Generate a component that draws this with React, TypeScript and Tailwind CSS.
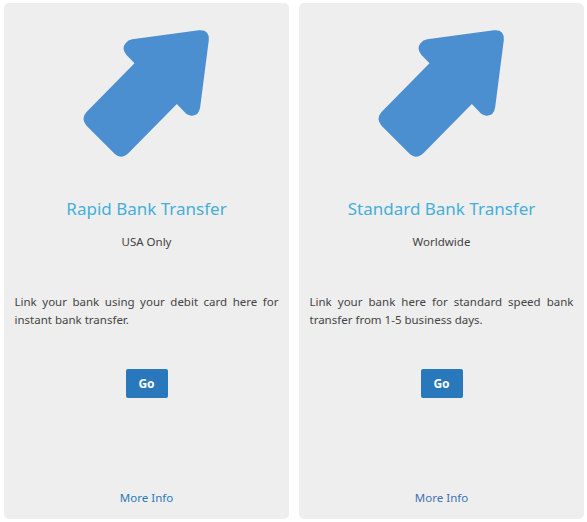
const cards = [
  {
    title: "Rapid Bank Transfer",
    region: "USA Only",
    text: "Link your bank using your debit card here for instant bank transfer.",
    link: "text-[#2a7ab8]",
  },
  {
    title: "Standard Bank Transfer",
    region: "Worldwide",
    text: "Link your bank here for standard speed bank transfer from 1-5 business days.",
    link: "text-[#3f72b4]",
  },
];

function ArrowIcon() {
  return (
    <svg viewBox="0 0 510 480" className="mx-auto block h-[160px] w-[170px] -translate-x-[1.5px]">
      <path
        fill="#4b8fd0"
        d="M215 88 L415 61 Q447 58 445 90 L419 292 Q415 318 393 317 Q380 316 372 306 L349 282 L205 428 Q183 450 163 432 L78 347 Q60 325 78 306 L222 160 L198 135 Q182 115 195 100 Q203 90 215 88 Z"
      />
    </svg>
  );
}

function TransferCard({
  title,
  region,
  text,
  link,
}: {
  title: string;
  region: string;
  text: string;
  link: string;
}) {
  return (
    <div className="flex h-[516px] w-[285px] flex-col rounded-[5px] bg-[#eeeeee] px-[10.5px] pt-[7px] text-center text-[11.5px] leading-[18px] text-[#444444]">
      <ArrowIcon />
      <h3 className="mt-[27px] text-[17px] font-normal leading-[24px] text-[#45aed9]">{title}</h3>
      <p className="mt-[12px]">{region}</p>
      <p className="mt-[42px] text-justify">{text}</p>
      <button className="mx-auto mt-[40px] block h-[29px] w-[42px] rounded-[2px] bg-[#2878bb] text-[12px] font-bold text-white">
        Go
      </button>
      <a className={`mt-auto mb-[12px] block ${link}`}>More Info</a>
    </div>
  );
}

export default function App() {
  return (
    <div
      className="flex h-[522px] w-[587px] gap-[10px] bg-white pl-[4px] pt-[3px]"
      style={{ fontFamily: '"Noto Sans", sans-serif' }}
    >
      {cards.map((c) => (
        <TransferCard key={c.title} {...c} />
      ))}
    </div>
  );
}
